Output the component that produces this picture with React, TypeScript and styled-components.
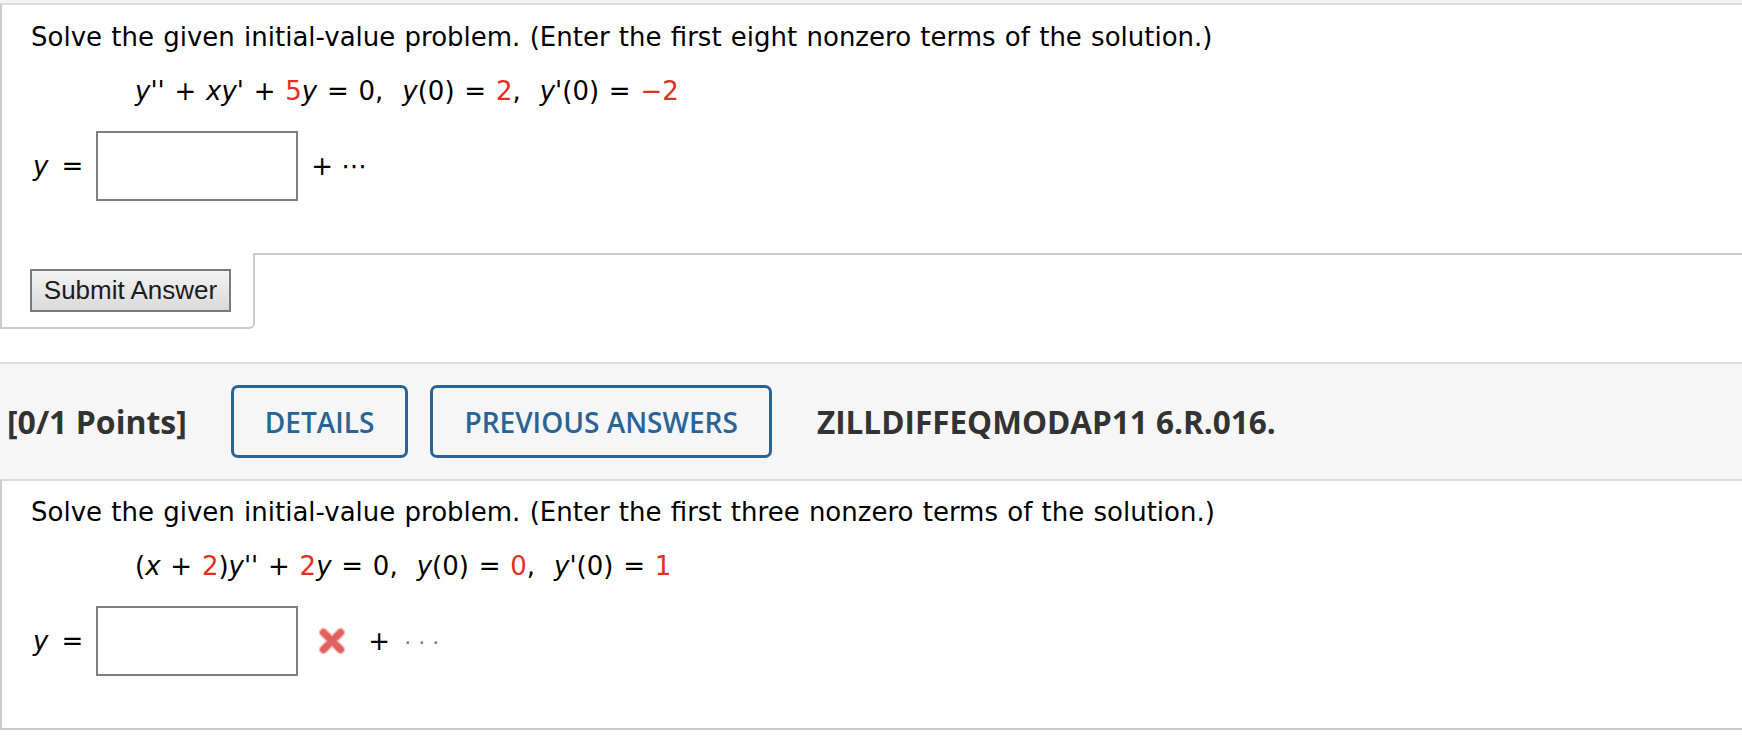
import React from "react";
import styled, { createGlobalStyle } from "styled-components";

const GlobalStyle = createGlobalStyle`
  html, body {
    margin: 0;
    padding: 0;
    background: #ffffff;
  }
  body {
    width: 1742px;
    height: 750px;
    overflow: hidden;
  }
`;

const TopEdge = styled.div`
  height: 3px;
  background: #f3f3f3;
`;

const Card = styled.section<{ $bottom?: boolean }>`
  border-top: 2px solid #dddddd;
  border-left: 2px solid #cccccc;
  border-bottom: ${(p) => (p.$bottom ? "2px solid #cccccc" : "none")};
  font-family: "DejaVu Sans", Verdana, sans-serif;
  color: #000;
`;

const Body = styled.div<{ $top: number; $bottom: number }>`
  padding: ${(p) => p.$top}px 0 ${(p) => p.$bottom}px 29px;
`;

const Prompt = styled.p`
  margin: 0;
  font-size: 26px;
  line-height: 32px;
  word-spacing: 1px;
`;

const Equation = styled.div`
  margin-top: 22px;
  padding-left: 104px;
  font-size: 26px;
  line-height: 32px;
  word-spacing: 1.5px;
  white-space: pre;
`;

const V = styled.i`
  font-style: italic;
`;

const Red = styled.span`
  color: #e62e1f;
`;

const Sep = styled.span`
  display: inline-block;
  width: 19px;
`;

const AnswerRow = styled.div`
  margin-top: 24px;
  padding-left: 2px;
  display: flex;
  align-items: center;
  gap: 13px;
  font-size: 26px;
`;

const AnswerBox = styled.input`
  width: 202px;
  height: 70px;
  box-sizing: border-box;
  border: 2px solid #808080;
  background: #ffffff;
  margin: 0;
  padding: 0;
`;

const Trail = styled.span<{ $gap: number }>`
  margin-left: ${(p) => p.$gap}px;
`;

const Ellipsis = styled.span`
  font-size: 26px;
  margin-left: 0;
`;

const SpacedDots = styled.span`
  margin-left: 6px;
  font-size: 22px;
  color: #7a7a7a;
`;

const MarkSlot = styled.span`
  display: inline-flex;
  margin-left: 7px;
`;

const Footer = styled.div`
  display: flex;
  height: 76px;
`;

const SubmitCell = styled.div`
  width: 255px;
  box-sizing: border-box;
  margin-left: -2px;
  border-left: 2px solid #cccccc;
  border-right: 2px solid #cccccc;
  border-bottom: 2px solid #cccccc;
  border-bottom-right-radius: 6px;
  padding: 16px 0 0 28px;
`;

const FooterRest = styled.div`
  flex: 1;
  border-top: 2px solid #cccccc;
`;

const SubmitButton = styled.button`
  width: 201px;
  height: 43px;
  box-sizing: border-box;
  border: 2px solid #7b7b7b;
  background: linear-gradient(#f3f3f3, #dadada);
  font-family: "Liberation Sans", Arial, sans-serif;
  font-size: 26px;
  color: #1c1c1c;
  padding: 0;
  margin: 0;
`;

const HeaderBar = styled.header`
  margin-top: 33px;
  display: flex;
  align-items: center;
  gap: 22px;
  background: #f6f6f6;
  border-top: 2px solid #dddddd;
  padding: 21px 0 21px 7px;
  font-family: "Open Sans", "DejaVu Sans", sans-serif;
`;

const Points = styled.span`
  font-size: 32px;
  font-weight: 700;
  color: #333333;
  margin-right: 22px;
`;

const HeaderButton = styled.button`
  height: 73px;
  box-sizing: border-box;
  border: 3px solid #2a6496;
  border-radius: 7px;
  background: transparent;
  padding: 0 31px;
  margin: 0;
  font-family: "Open Sans", "DejaVu Sans", sans-serif;
  font-size: 28px;
  font-weight: 600;
  color: #2a6496;
`;

const Code = styled.span`
  margin-left: 23px;
  font-size: 31.5px;
  font-weight: 700;
  color: #333333;
`;

const WrongMark = () => (
  <svg width="28" height="28" viewBox="0 0 28 28">
    <path
      d="M5.5 5.5 L22.5 22.5 M22.5 5.5 L5.5 22.5"
      stroke="#f5bcbc"
      strokeWidth="9.5"
      strokeLinecap="round"
    />
    <path
      d="M5.5 5.5 L22.5 22.5 M22.5 5.5 L5.5 22.5"
      stroke="#e36060"
      strokeWidth="6.5"
      strokeLinecap="round"
    />
  </svg>
);

export default function App() {
  return (
    <>
      <GlobalStyle />
      <TopEdge />
      <Card>
        <Body $top={16} $bottom={52}>
          <Prompt>
            Solve the given initial-value problem. (Enter the first eight nonzero terms of the
            solution.)
          </Prompt>
          <Equation>
            <V>y''</V> + <V>xy'</V> + <Red>5</Red>
            <V>y</V> = 0,
            <Sep />
            <V>y</V>(0) = <Red>2</Red>,
            <Sep />
            <V>y'</V>(0) = <Red>−2</Red>
          </Equation>
          <AnswerRow>
            <V>y</V>
            <span>=</span>
            <AnswerBox type="text" />
            <span>
              <Trail $gap={0}>+</Trail> <Ellipsis>⋯</Ellipsis>
            </span>
          </AnswerRow>
        </Body>
        <Footer>
          <SubmitCell>
            <SubmitButton>Submit Answer</SubmitButton>
          </SubmitCell>
          <FooterRest />
        </Footer>
      </Card>

      <HeaderBar>
        <Points>[0/1 Points]</Points>
        <HeaderButton>DETAILS</HeaderButton>
        <HeaderButton>PREVIOUS ANSWERS</HeaderButton>
        <Code>ZILLDIFFEQMODAP11 6.R.016.</Code>
      </HeaderBar>

      <Card $bottom>
        <Body $top={15} $bottom={52}>
          <Prompt>
            Solve the given initial-value problem. (Enter the first three nonzero terms of the
            solution.)
          </Prompt>
          <Equation>
            (<V>x</V> + <Red>2</Red>)<V>y''</V> + <Red>2</Red>
            <V>y</V> = 0,
            <Sep />
            <V>y</V>(0) = <Red>0</Red>,
            <Sep />
            <V>y'</V>(0) = <Red>1</Red>
          </Equation>
          <AnswerRow>
            <V>y</V>
            <span>=</span>
            <AnswerBox type="text" />
            <MarkSlot>
              <WrongMark />
            </MarkSlot>
            <span>
              <Trail $gap={9}>+</Trail> <SpacedDots>· · ·</SpacedDots>
            </span>
          </AnswerRow>
        </Body>
      </Card>
    </>
  );
}
